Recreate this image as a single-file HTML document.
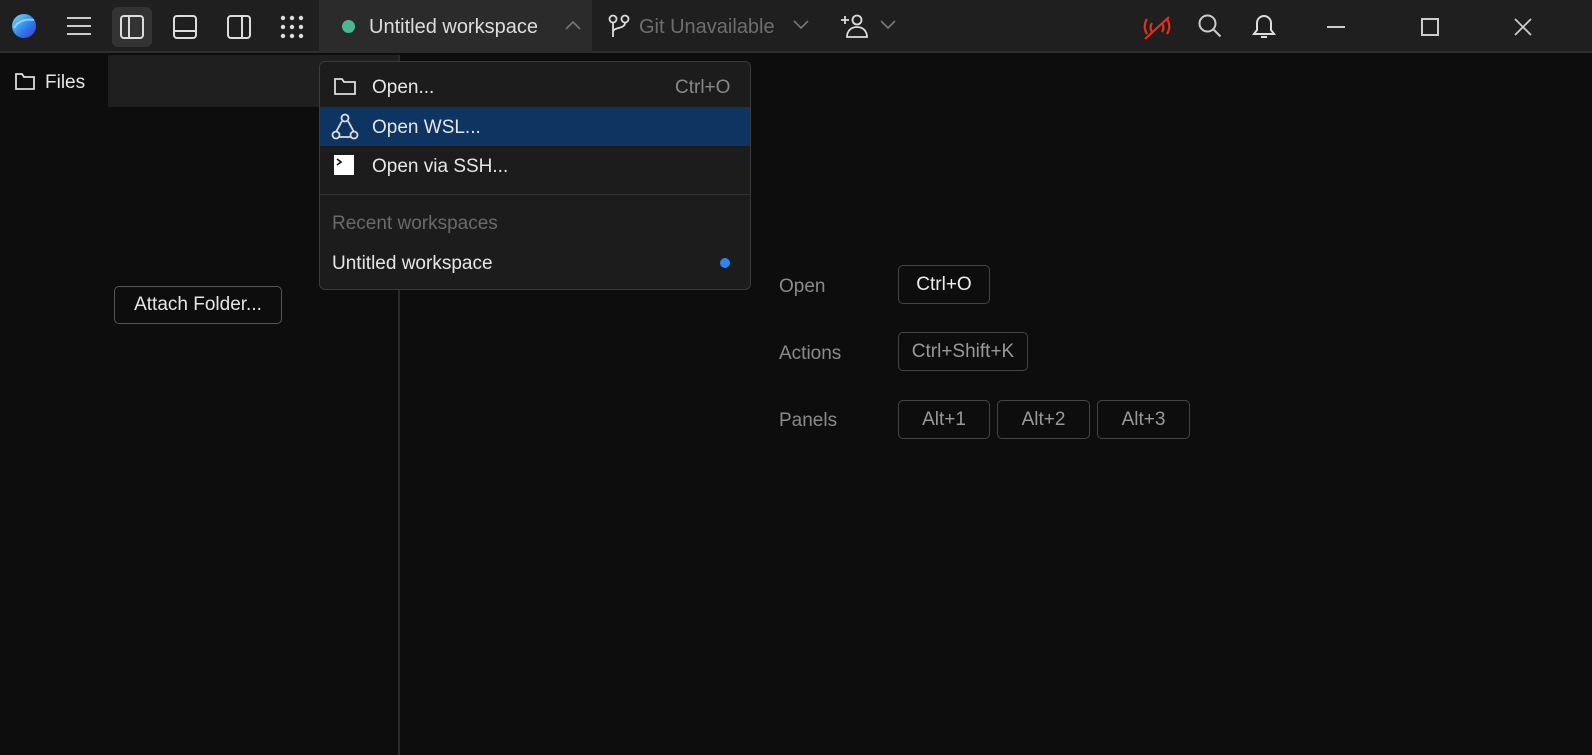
<!DOCTYPE html>
<html><head><meta charset="utf-8"><style>
*{box-sizing:border-box;margin:0;padding:0}
body{width:1592px;height:754px;background:#0d0d0d;font-family:"Liberation Sans",sans-serif;color:#ddd;position:relative;overflow:hidden;font-size:19px}
.abs{position:absolute}
.top{left:0;top:0;width:1592px;height:53px;background:#1f1f1f;border-bottom:2px solid #2e2e2e}
.kbd{position:absolute;border:1.5px solid #444;border-radius:5px;height:39px;display:flex;align-items:center;justify-content:center;color:#999;font-size:19px}
.lbl{position:absolute;color:#8a8a8a;font-size:19px}
.mi{position:absolute;left:372px;font-size:19px;color:#e6e6e6}
</style></head><body>
<div class="abs top"></div>
<svg class="abs" style="left:10px;top:12px" width="28" height="28" viewBox="0 0 28 28"><defs><linearGradient id="g" x1="0" y1="0" x2="1" y2="1"><stop offset="0" stop-color="#6fe0ff"/><stop offset=".6" stop-color="#2b7be8"/><stop offset="1" stop-color="#5a2bd0"/></linearGradient></defs><circle cx="14" cy="14" r="12" fill="url(#g)"/><path d="M4 16 Q10 6 24 8" stroke="#bff3ff" stroke-width="2" fill="none" opacity=".6"/></svg>
<svg class="abs" style="left:66px;top:15px" width="26" height="22" viewBox="0 0 26 22" stroke="#ccc" stroke-width="2"><path d="M1 3h24M1 11h24M1 19h24"/></svg>
<div class="abs" style="left:112px;top:7px;width:40px;height:40px;background:#333;border-radius:6px"></div>
<svg class="abs" style="left:119px;top:14px" width="26" height="26" viewBox="0 0 26 26" fill="none" stroke="#ddd" stroke-width="2"><rect x="2" y="2" width="22" height="22" rx="3"/><path d="M10 2v22"/></svg>
<svg class="abs" style="left:172px;top:14px" width="26" height="26" viewBox="0 0 26 26" fill="none" stroke="#ddd" stroke-width="2"><rect x="2" y="2" width="22" height="22" rx="3"/><path d="M2 17h22"/></svg>
<svg class="abs" style="left:226px;top:14px" width="26" height="26" viewBox="0 0 26 26" fill="none" stroke="#ddd" stroke-width="2"><rect x="2" y="2" width="22" height="22" rx="3"/><path d="M16 2v22"/></svg>
<svg class="abs" style="left:280px;top:15px" width="24" height="24" viewBox="0 0 24 24" fill="#ddd"><circle cx="3" cy="3" r="2.2"/><circle cx="12" cy="3" r="2.2"/><circle cx="21" cy="3" r="2.2"/><circle cx="3" cy="12" r="2.2"/><circle cx="12" cy="12" r="2.2"/><circle cx="21" cy="12" r="2.2"/><circle cx="3" cy="21" r="2.2"/><circle cx="12" cy="21" r="2.2"/><circle cx="21" cy="21" r="2.2"/></svg>
<div class="abs" style="left:319px;top:0;width:273px;height:53px;background:#2b2b2b"></div>
<div class="abs" style="left:342px;top:20px;width:13px;height:13px;border-radius:50%;background:#4cb893"></div>
<div class="abs" style="left:369px;top:16px;font-size:20px;color:#ddd">Untitled workspace</div>
<svg class="abs" style="left:565px;top:20px" width="16" height="10" viewBox="0 0 16 10" fill="none" stroke="#777" stroke-width="1.6"><path d="M1 9l7-7 7 7"/></svg>
<svg class="abs" style="left:608px;top:14px" width="22" height="24" viewBox="0 0 22 24" fill="none" stroke="#ddd" stroke-width="1.8"><circle cx="5" cy="5" r="3.5"/><circle cx="17" cy="5" r="3.5"/><path d="M5 9v14M17 9c0 6-12 4-12 9"/></svg>
<div class="abs" style="left:639px;top:16px;font-size:20px;color:#6e6e6e">Git Unavailable</div>
<svg class="abs" style="left:793px;top:20px" width="16" height="10" viewBox="0 0 16 10" fill="none" stroke="#777" stroke-width="1.6"><path d="M1 1l7 7 7-7"/></svg>
<svg class="abs" style="left:840px;top:13px" width="30" height="26" viewBox="0 0 30 26" fill="none" stroke="#ddd" stroke-width="1.8"><path d="M1 7h8M5 3v8"/><circle cx="17" cy="7" r="4.5"/><path d="M7 24c0-6 4-10 10-10s10 4 10 10z"/></svg>
<svg class="abs" style="left:880px;top:20px" width="16" height="10" viewBox="0 0 16 10" fill="none" stroke="#777" stroke-width="1.6"><path d="M1 1l7 7 7-7"/></svg>
<svg class="abs" style="left:1141px;top:13px" width="32" height="28" viewBox="0 0 32 28" fill="none" stroke="#e03020" stroke-width="2.2"><path d="M6 6c-3 5-3 10 0 15M26 6c3 5 3 10 0 15M11 10c-2 3-2 6 0 9M21 10c2 3 2 6 0 9"/><path d="M4 26L28 4"/></svg>
<svg class="abs" style="left:1197px;top:13px" width="26" height="26" viewBox="0 0 26 26" fill="none" stroke="#ccc" stroke-width="2"><circle cx="10.5" cy="10.5" r="8"/><path d="M16.5 16.5l7 7"/></svg>
<svg class="abs" style="left:1251px;top:12px" width="26" height="28" viewBox="0 0 26 28" fill="none" stroke="#ddd" stroke-width="2"><path d="M3 22h20l-3-4V11a7 7 0 0 0-14 0v7z"/><path d="M10 25h6"/></svg>
<svg class="abs" style="left:1327px;top:26px" width="18" height="2"><rect width="18" height="2" fill="#ccc"/></svg>
<svg class="abs" style="left:1421px;top:18px" width="18" height="18" viewBox="0 0 18 18" fill="none" stroke="#ccc" stroke-width="2"><rect x="1" y="1" width="16" height="16"/></svg>
<svg class="abs" style="left:1514px;top:18px" width="18" height="18" viewBox="0 0 18 18" fill="none" stroke="#ccc" stroke-width="1.8"><path d="M1 1l16 16M17 1L1 17"/></svg>
<div class="abs" style="left:108px;top:55px;width:290px;height:52px;background:#1f1f1f"></div>
<svg class="abs" style="left:15px;top:72px" width="20" height="18" viewBox="0 0 20 18" fill="none" stroke="#ddd" stroke-width="1.8"><path d="M1 2h6l2 3h10v12H1z"/></svg>
<div class="abs" style="left:45px;top:72px;font-size:19px;color:#e6e6e6">Files</div>
<div class="abs" style="left:114px;top:286px;width:168px;height:38px;border:1.5px solid #555;border-radius:5px;display:flex;align-items:center;justify-content:center;color:#e6e6e6;font-size:19px">Attach Folder...</div>
<div class="abs" style="left:398px;top:55px;width:2px;height:700px;background:#2a2a2a"></div>
<div class="lbl" style="left:779px;top:276px">Open</div>
<div class="kbd" style="left:898px;top:265px;width:92px;color:#eee">Ctrl+O</div>
<div class="lbl" style="left:779px;top:343px">Actions</div>
<div class="kbd" style="left:898px;top:332px;width:130px">Ctrl+Shift+K</div>
<div class="lbl" style="left:779px;top:410px">Panels</div>
<div class="kbd" style="left:898px;top:400px;width:92px">Alt+1</div>
<div class="kbd" style="left:997px;top:400px;width:93px">Alt+2</div>
<div class="kbd" style="left:1097px;top:400px;width:93px">Alt+3</div>
<div class="abs" style="left:319px;top:61px;width:432px;height:229px;background:#1c1c1c;border:1px solid #3a3a3a;border-radius:6px"></div>
<div class="abs" style="left:320px;top:107px;width:430px;height:39px;background:#0e3462"></div>
<svg class="abs" style="left:334px;top:77px" width="22" height="18" viewBox="0 0 22 18" fill="none" stroke="#ddd" stroke-width="1.8"><path d="M1 2h7l2 3h11v12H1z"/></svg>
<div class="mi" style="top:77px">Open...</div>
<div class="abs" style="left:675px;top:77px;color:#888;font-size:19px">Ctrl+O</div>
<svg class="abs" style="left:331px;top:113px" width="28" height="28" viewBox="0 0 28 28" fill="none" stroke="#ddd" stroke-width="1.8"><circle cx="14" cy="5" r="3.5"/><path d="M11 8L5 19M17 8l6 11M8 24h12"/><circle cx="5" cy="22" r="3.5"/><circle cx="23" cy="22" r="3.5"/></svg>
<div class="mi" style="top:117px">Open WSL...</div>
<svg class="abs" style="left:334px;top:155px" width="20" height="20" viewBox="0 0 20 20"><rect width="20" height="20" fill="#fff"/><path d="M3 4l4 3-4 3" stroke="#111" stroke-width="1.6" fill="none"/></svg>
<div class="mi" style="top:156px">Open via SSH...</div>
<div class="abs" style="left:320px;top:194px;width:430px;height:1px;background:#333"></div>
<div class="abs" style="left:332px;top:213px;color:#6a6a6a;font-size:19px">Recent workspaces</div>
<div class="abs" style="left:332px;top:253px;color:#e6e6e6;font-size:19px">Untitled workspace</div>
<div class="abs" style="left:720px;top:258px;width:10px;height:10px;border-radius:50%;background:#2a86f0"></div>
</body></html>
